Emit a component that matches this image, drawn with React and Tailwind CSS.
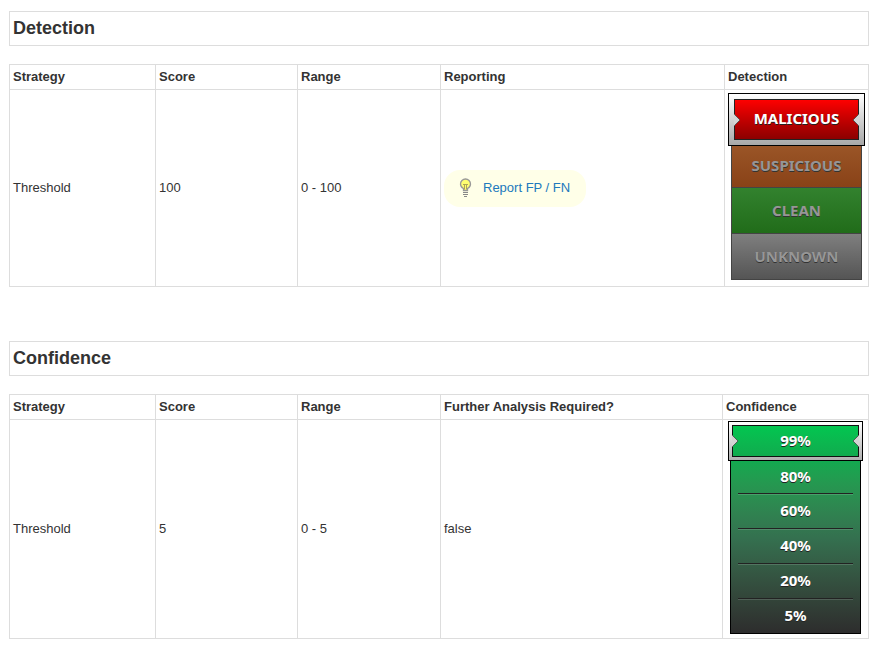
import React from "react";

function Heading({ children }) {
  return (
    <h2 className="h-[35px] border border-[#ddd] px-[3px] text-lg leading-8 font-bold text-[#333]">
      {children}
    </h2>
  );
}

function ResultTable({ columns, lastWidth, row, gauge, label }) {
  return (
    <table
      aria-label={label}
      className="mt-[18px] w-full table-fixed border-separate border-spacing-0 border-t border-l border-[#ddd] text-[13px] leading-[18px] text-[#333]"
    >
      <colgroup>
        <col className="w-[146px]" />
        <col className="w-[142px]" />
        <col className="w-[143px]" />
        <col />
        <col className={lastWidth} />
      </colgroup>
      <thead>
        <tr>
          {columns.map((c) => (
            <th key={c} className="h-[25px] border-r border-b border-[#ddd] px-[3px] text-left font-bold">
              {c}
            </th>
          ))}
        </tr>
      </thead>
      <tbody>
        <tr>
          {row.map((c, i) => (
            <td key={i} className="border-r border-b border-[#ddd] px-[3px] align-middle">
              {c}
            </td>
          ))}
          {gauge}
        </tr>
      </tbody>
    </table>
  );
}

function Notches() {
  return (
    <>
      <svg className="absolute top-1/2 -left-px -translate-y-1/2" width="7" height="12" viewBox="0 0 7 12">
        <path d="M0 0L6 6L0 12Z" fill="#d4d4d4" />
        <path d="M0.500 0.500L6 6L0.500 11.500" fill="none" stroke="#444" strokeWidth="0.800" />
      </svg>
      <svg className="absolute top-1/2 -right-px -translate-y-1/2" width="7" height="12" viewBox="0 0 7 12">
        <path d="M7 0L1 6L7 12Z" fill="#d4d4d4" />
        <path d="M6.500 0.500L1 6L6.500 11.500" fill="none" stroke="#444" strokeWidth="0.800" />
      </svg>
    </>
  );
}

const gaugeText = "font-['Noto_Sans',sans-serif] text-[15px] leading-5 font-bold";
const step = "flex items-center justify-center pb-[2px]";
const ruled = "border-b border-[#222] shadow-[0_1px_0_#ffffff26]";

function DetectionGauge() {
  return (
    <td className="border-r border-b border-[#ddd] px-[3px] pt-[3px] pb-[6px]">
      <div className={`flex flex-col items-center text-center ${gaugeText}`}>
        <div className="h-[53px] w-[137px] border border-black bg-linear-to-b from-white to-[#a8a8a8] p-[5px]">
          <div className="relative flex h-full items-center justify-center border border-[#222] bg-linear-to-b from-[#fe0000] to-[#8c0000] pb-1 text-white text-shadow-[0_1px_0_#222]">
            MALICIOUS
            <Notches />
          </div>
        </div>
        <div className="w-[131px] border-x border-b border-[#444] text-[#969696] text-shadow-[0_1px_0_#333]">
          <div className="flex h-[41px] items-center justify-center bg-linear-to-b from-[#9a5527] to-[#894217] pb-1">SUSPICIOUS</div>
          <div className="flex h-[46px] items-center justify-center border-t border-[#444] bg-linear-to-b from-[#32822e] to-[#216c19] pb-[2px]">CLEAN</div>
          <div className="flex h-[46px] items-center justify-center border-t border-[#444] bg-linear-to-b from-[#7f7f7f] to-[#555] pb-[2px]">UNKNOWN</div>
        </div>
      </div>
    </td>
  );
}

function ConfidenceGauge() {
  return (
    <td className="border-r border-b border-[#ddd] pt-px pr-[5px] pb-1 pl-[5px]">
      <div className={`flex flex-col items-center text-center text-white text-shadow-[0_1px_0_#222] ${gaugeText}`}>
        <div className="h-10 w-[135px] border border-black bg-linear-to-b from-white to-[#b0b0b0] p-[3px]">
          <div className="relative flex h-full items-center justify-center border border-[#111] bg-linear-to-b from-[#02c650] to-[#10ab4e] pb-[2px]">
            99%
            <Notches />
          </div>
        </div>
        <div className="w-[131px] border-x border-b border-black bg-linear-to-b from-[#12a94f] via-[#34704f] via-45% to-[#2d2d2d] px-[7px]">
          <div className={`h-[33px] ${step} ${ruled}`}>80%</div>
          <div className={`h-[35px] ${step} ${ruled}`}>60%</div>
          <div className={`h-[35px] ${step} ${ruled}`}>40%</div>
          <div className={`h-[35px] ${step} ${ruled}`}>20%</div>
          <div className={`h-[34px] ${step}`}>5%</div>
        </div>
      </div>
    </td>
  );
}

function ReportLink() {
  return (
    <a
      href="#report"
      className="inline-flex h-[37px] items-center gap-[10px] rounded-2xl bg-[#ffffe8] pr-4 pl-[15px] align-middle text-[#2179bd]"
    >
      <svg width="14" height="20" viewBox="0 0 14 20" fill="none">
        <path
          d="M4.500 12.500V10.500C2.500 9.500 1.500 8 1.500 6A5 5 0 0 1 11.500 6C11.500 8 10.500 9.500 8.500 10.500V12.500Z"
          fill="#ffff70"
          stroke="#999"
          strokeWidth="1.300"
        />
        <path d="M4 6.500H9M5.500 7V11.500M7.500 7V11.500" stroke="#998d50" strokeWidth="0.800" />
        <path d="M4 14.500H9M4 16.500H9M5 18.500H8" stroke="#888" />
      </svg>
      Report FP / FN
    </a>
  );
}

export default function App() {
  return (
    <main className="flex min-h-screen flex-col bg-white pt-[11px] pr-[17px] pb-2 pl-[9px] font-['Liberation_Sans',Arial,sans-serif]">
      <section>
        <Heading>Detection</Heading>
        <ResultTable
          label="Detection"
          columns={["Strategy", "Score", "Range", "Reporting", "Detection"]}
          lastWidth="w-[144px]"
          row={["Threshold", "100", "0 - 100", <ReportLink key="r" />]}
          gauge={<DetectionGauge />}
        />
      </section>
      <section className="mt-[54px]">
        <Heading>Confidence</Heading>
        <ResultTable
          label="Confidence"
          columns={["Strategy", "Score", "Range", "Further Analysis Required?", "Confidence"]}
          lastWidth="w-[146px]"
          row={["Threshold", "5", "0 - 5", "false"]}
          gauge={<ConfidenceGauge />}
        />
      </section>
    </main>
  );
}
